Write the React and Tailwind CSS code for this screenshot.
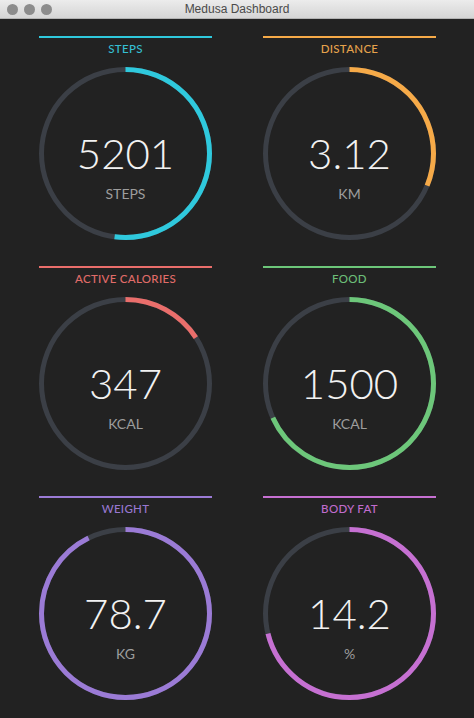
import React from "react";

const R = 84;
const C = 2 * Math.PI * R;

const items = [
  { title: "STEPS", value: "5201", unit: "STEPS", pct: 0.5201, color: "#2fc9dd", label: "text-[#35bfd2]", bar: "bg-[#2fc9dd]" },
  { title: "DISTANCE", value: "3.12", unit: "KM", pct: 0.312, color: "#f6aa48", label: "text-[#e6a24c]", bar: "bg-[#f6aa48]" },
  { title: "ACTIVE CALORIES", value: "347", unit: "KCAL", pct: 347 / 2200, color: "#ea6e6b", label: "text-[#e06c69]", bar: "bg-[#ea6e6b]" },
  { title: "FOOD", value: "1500", unit: "KCAL", pct: 1500 / 2200, color: "#6dc77a", label: "text-[#6cbe78]", bar: "bg-[#6dc77a]" },
  { title: "WEIGHT", value: "78.7", unit: "KG", pct: 78.7 / 85, color: "#9b7bd6", label: "text-[#9878d0]", bar: "bg-[#9b7bd6]" },
  { title: "BODY FAT", value: "14.2", unit: "%", pct: 14.2 / 20, color: "#c670d2", label: "text-[#c06ccc]", bar: "bg-[#c670d2]" },
];

function Ring({ pct, color }) {
  const len = C * pct;
  return (
    <svg width="173" height="173" viewBox="0 0 173 173" className="[grid-area:1/1]">
      <circle cx="86.5" cy="86.5" r={R} fill="none" stroke="#3b3f46" strokeWidth="5" />
      <circle
        cx="86.5"
        cy="86.5"
        r={R}
        fill="none"
        stroke={color}
        strokeWidth="5"
        strokeDasharray={`${len} ${C}`}
        transform="rotate(-90 86.5 86.5)"
      />
    </svg>
  );
}

function Card({ item }) {
  return (
    <div className="flex flex-col items-center w-[173px]">
      <div className={`h-[2px] w-full ${item.bar}`} />
      <div className={`mt-[4px] text-[11.5px] leading-[14px] font-medium tracking-[0.3px] ${item.label}`}>
        {item.title}
      </div>
      <div className="mt-[11px] grid w-[173px] h-[173px]">
        <Ring pct={item.pct} color={item.color} />
        <div className="[grid-area:1/1] flex flex-col items-center pt-[65px]">
          <div className="text-[42px] leading-[42px] h-[42px] font-light text-[#f2f2f2]">{item.value}</div>
          <div className="mt-[13px] text-[14px] leading-[14px] text-[#9d9d9d]">{item.unit}</div>
        </div>
      </div>
    </div>
  );
}

export default function App() {
  return (
    <div className="w-[474px] h-[718px] bg-[#222222] overflow-hidden" style={{ fontFamily: "Lato, 'Open Sans', sans-serif" }}>
      <div className="relative h-[19px] bg-gradient-to-b from-[#ececec] to-[#d5d5d5] border-b border-[#b3b3b3] flex items-center justify-center">
        <div className="absolute left-[7px] top-[4px] flex gap-[6px]">
          <div className="w-[11px] h-[11px] rounded-full bg-[#8c8c8c]" />
          <div className="w-[11px] h-[11px] rounded-full bg-[#8c8c8c]" />
          <div className="w-[11px] h-[11px] rounded-full bg-[#8c8c8c]" />
        </div>
        <div className="text-[12px] leading-[18px] text-[#4a4a4a]" style={{ fontFamily: "'Liberation Sans', Arial, sans-serif" }}>
          Medusa Dashboard
        </div>
      </div>
      <div className="pl-[39px] pt-[17px] grid grid-cols-[173px_173px] gap-x-[51px] gap-y-[26px]">
        {items.map((it) => (
          <Card key={it.title} item={it} />
        ))}
      </div>
    </div>
  );
}
